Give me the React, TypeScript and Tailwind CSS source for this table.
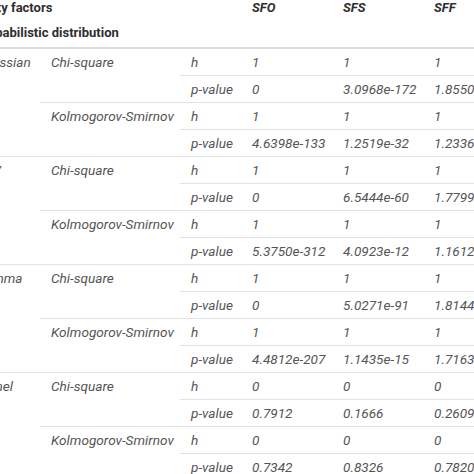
import React from "react";

type Test = { name: string; h: string[]; p: string[] };
type Group = { name: string; tests: Test[] };

const groups: Group[] = [
  {
    name: "Gaussian",
    tests: [
      { name: "Chi-square", h: ["1", "1", "1"], p: ["0", "3.0968e-172", "1.8550e-98"] },
      { name: "Kolmogorov-Smirnov", h: ["1", "1", "1"], p: ["4.6398e-133", "1.2519e-32", "1.2336e-20"] },
    ],
  },
  {
    name: "GEV",
    tests: [
      { name: "Chi-square", h: ["1", "1", "1"], p: ["0", "6.5444e-60", "1.7799e-41"] },
      { name: "Kolmogorov-Smirnov", h: ["1", "1", "1"], p: ["5.3750e-312", "4.0923e-12", "1.1612e-09"] },
    ],
  },
  {
    name: "Gamma",
    tests: [
      { name: "Chi-square", h: ["1", "1", "1"], p: ["0", "5.0271e-91", "1.8144e-63"] },
      { name: "Kolmogorov-Smirnov", h: ["1", "1", "1"], p: ["4.4812e-207", "1.1435e-15", "1.7163e-11"] },
    ],
  },
  {
    name: "Kernel",
    tests: [
      { name: "Chi-square", h: ["0", "0", "0"], p: ["0.7912", "0.1666", "0.2609"] },
      { name: "Kolmogorov-Smirnov", h: ["0", "0", "0"], p: ["0.7342", "0.8326", "0.7820"] },
    ],
  },
];

function Row({ label, vals, border }: { label: string; vals: string[]; border: boolean }) {
  return (
    <div className={`flex h-[26px] box-content leading-[26px] ${border ? "border-t border-[#e2e2e2]" : ""}`}>
      <div className="w-[61px] pl-[11px]">{label}</div>
      {vals.map((v, i) => (
        <div key={i} className="w-[91px] pl-[11px] whitespace-nowrap">
          {v}
        </div>
      ))}
    </div>
  );
}

export default function App() {
  return (
    <div
      className="w-[474px] h-[474px] overflow-hidden bg-white text-[13px]"
      style={{ fontFamily: "Roboto, 'Liberation Sans', sans-serif" }}
    >
      <div className="ml-[-33px] w-[547px]">
        {/* Header */}
        <div className="border-b-2 border-[#dedede] h-[49px] text-[#2e2e2e] font-bold">
          <div className="flex h-[16px] leading-[16px]">
            <div className="w-[274px] pl-[11px]">
              <span className="ml-[-38px] whitespace-nowrap">Uncertainty factors</span>
            </div>
            <div className="w-[91px] pl-[11px] italic">SFO</div>
            <div className="w-[91px] pl-[11px] italic">SFS</div>
            <div className="w-[91px] pl-[11px] italic">SFF</div>
          </div>
          <div className="pt-[9px] leading-[16px] pl-[8px] whitespace-nowrap">Probabilistic distribution</div>
        </div>
        {/* Body */}
        <div className="italic text-[#555555] text-[13.6px]">
          {groups.map((g, gi) => (
            <div key={g.name} className={`flex ${gi > 0 ? "border-t border-[#e2e2e2]" : ""}`}>
              <div className="w-[73px] pl-[9px] leading-[26px] whitespace-nowrap">{g.name}</div>
              <div className="flex flex-col">
                {g.tests.map((t, ti) => (
                  <div key={t.name} className={`flex ${ti > 0 ? "border-t border-[#e2e2e2]" : ""}`}>
                    <div className="w-[140px] pl-[11px] leading-[26px] whitespace-nowrap">{t.name}</div>
                    <div className="flex flex-col">
                      <Row label="h" vals={t.h} border={false} />
                      <Row label="p-value" vals={t.p} border={true} />
                    </div>
                  </div>
                ))}
              </div>
            </div>
          ))}
        </div>
      </div>
    </div>
  );
}
